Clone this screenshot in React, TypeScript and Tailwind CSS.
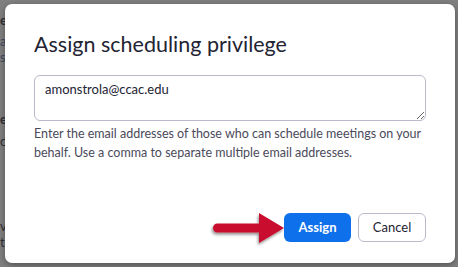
const Arrow = () => (
  <svg width="78" height="36" viewBox="0 0 78 36" className="absolute left-[210px] top-[210px]">
    <defs>
      <filter id="sh" x="-20%" y="-30%" width="140%" height="170%">
        <feDropShadow dx="-1" dy="2" stdDeviation="1.5" floodColor="#000" floodOpacity="0.45" />
      </filter>
    </defs>
    <g filter="url(#sh)">
      <path d="M7.5 13.5 H49 V3 L74 18 L49 33 V22.5 H7.5 A4.5 4.5 0 0 1 7.5 13.5 Z" fill="#c8102e" />
    </g>
  </svg>
);

export default function App() {
  return (
    <div className="relative w-[458px] h-[267px] overflow-hidden bg-[#7f7f7f] font-['Lato','Noto_Sans',sans-serif]">
      {/* dimmed page behind the dialog */}
      <div className="absolute inset-0 flex flex-col pt-[12px] text-[13px] leading-[16px] text-[#2f2f35]">
        <span className="font-bold">er</span>
        <span className="mt-[5px] text-[#3d4a60]">a</span>
        <span className="text-[#3d4a60]">s</span>
        <span className="mt-[46px] font-bold">e</span>
        <span className="mt-[6px]">c</span>
        <span className="mt-[69px]">v</span>
        <span>t</span>
      </div>

      <div className="absolute inset-0 flex pl-[5px] pt-[4px]">
        <div className="relative w-[450px] h-[259px] bg-white rounded-[7px] shadow-[0_2px_6px_rgba(0,0,0,0.35)] flex flex-col px-[29px]">
          <h1 className="mt-[26px] text-[21.5px] leading-[28px] text-[#232333] font-normal">Assign scheduling privilege</h1>

          <textarea
            defaultValue="amonstrola@ccac.edu"
            className="mt-[17px] w-[392px] h-[46px] border border-[#babacc] rounded-[6px] px-[10px] py-[4px] text-[13px] leading-[18px] text-[#232333] outline-none"
          />

          <p className="mt-[3px] text-[12.5px] leading-[19px] text-[#4a4a5a]">
            Enter the email addresses of those who can schedule meetings on your behalf. Use a comma to separate multiple email addresses.
          </p>

          <div className="mt-auto mb-[21px] flex justify-end gap-[7px]">
            <button className="w-[67px] h-[29px] rounded-[6px] bg-[#0e71eb] text-white text-[13px] font-bold">Assign</button>
            <button className="w-[68px] h-[29px] rounded-[6px] border border-[#babacc] bg-white text-[#232333] text-[13px]">Cancel</button>
          </div>
        </div>
      </div>

      <Arrow />
    </div>
  );
}
